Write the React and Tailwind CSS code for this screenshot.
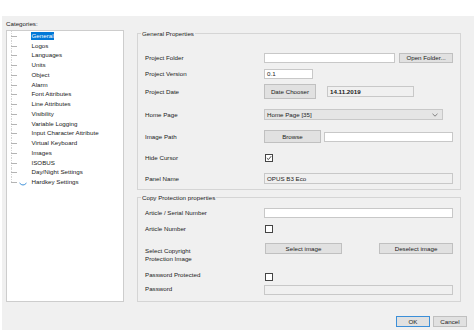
import { useState } from "react";

const categorias = [
  "General",
  "Logos",
  "Languages",
  "Units",
  "Object",
  "Alarm",
  "Font Attributes",
  "Line Attributes",
  "Visibility",
  "Variable Logging",
  "Input Character Attribute",
  "Virtual Keyboard",
  "Images",
  "ISOBUS",
  "Day/Night Settings",
  "Hardkey Settings",
];

function Boton({ children, className = "" }) {
  return (
    <div
      className={`flex items-center justify-center border bg-[#e1e1e1] text-[#1a1a1a] ${className}`}
    >
      {children}
    </div>
  );
}

function Campo({ children, className = "", gris = false }) {
  return (
    <div
      className={`flex items-center border border-[#c8c8c8] px-[2px] ${
        gris ? "bg-[#f0f0f0]" : "bg-white"
      } ${className}`}
    >
      {children}
    </div>
  );
}

function Casilla({ marcada = false }) {
  return (
    <div className="ml-[1px] flex h-[8px] w-[8px] items-center justify-center border border-[#444] bg-white">
      {marcada && (
        <svg width="6" height="6" viewBox="0 0 6 6">
          <path d="M0.8 3.1 L2.4 4.6 L5.2 1.2" fill="none" stroke="#333" strokeWidth="0.9" />
        </svg>
      )}
    </div>
  );
}

function Grupo({ titulo, className = "", children }) {
  return (
    <div className={`relative border border-[#d5d5d5] ${className}`}>
      <span className="absolute -top-[5px] left-[3px] bg-[#f0f0f0] px-[1px] leading-[9px]">
        {titulo}
      </span>
      {children}
    </div>
  );
}

function Fila({ label, alto, children }) {
  return (
    <div className={`flex items-center ${alto}`}>
      <span className="w-[119px] shrink-0">{label}</span>
      {children}
    </div>
  );
}

function App() {
  const [seleccion] = useState("General");

  return (
    <div
      className="h-[335px] w-[474px] overflow-hidden bg-white pl-[2px] pt-[16px] text-[6.2px] leading-[8px] text-[#222]"
      style={{ fontFamily: '"Liberation Sans", Arial, sans-serif' }}
    >
      <div className="flex h-[314px] w-[472px] flex-col bg-[#f0f0f0]">
        <div className="flex items-start">
          {/* categorias */}
          <div className="ml-[4px] flex flex-col pt-[4px]">
            <span className="h-[10px] leading-[8px]">Categories:</span>
            <div className="h-[272px] w-[118px] border border-[#cdcdcd] bg-white">
              {categorias.map((cat, i) => {
                const ultima = i === categorias.length - 1;
                return (
                  <div key={cat} className="flex h-[9.75px]">
                    <div className="relative ml-[4px] flex w-[20px] flex-col">
                      <div className="h-1/2 border-l border-dotted border-[#d4d4d4]" />
                      {!ultima && (
                        <div className="h-1/2 border-l border-dotted border-[#d4d4d4]" />
                      )}
                      <div className="absolute left-0 top-1/2 w-[6px] border-t border-[#b4b4b4]" />
                      {ultima && (
                        <svg
                          className="absolute left-[8px] top-[5px]"
                          width="8"
                          height="5"
                          viewBox="0 0 8 5"
                        >
                          <path d="M0.5 1 Q4 5 7.5 1" fill="none" stroke="#3c8fd8" strokeWidth="1" />
                        </svg>
                      )}
                    </div>
                    <div className="flex items-center">
                      <span
                        className={`px-[0.5px] leading-[8px] ${
                          cat === seleccion ? "bg-[#0078d7] text-white" : ""
                        }`}
                      >
                        {cat}
                      </span>
                    </div>
                  </div>
                );
              })}
            </div>
          </div>

          {/* propiedades */}
          <div className="ml-[13px] mt-[17px] flex flex-col">
            <Grupo titulo="General Properties" className="h-[157px] w-[324px] pl-[7px] pt-[16px]">
              <Fila label="Project Folder" alto="h-[16px]">
                <Campo className="h-[10px] w-[131px]" />
                <Boton className="ml-[4px] h-[10px] w-[54px] border-[#c0c0c0]">Open Folder...</Boton>
              </Fila>
              <Fila label="Project Version" alto="h-[15px]">
                <Campo className="h-[10px] w-[49px]">0.1</Campo>
              </Fila>
              <Fila label="Project Date" alto="h-[21px]">
                <Boton className="h-[15px] w-[52px] border-[#c0c0c0]">Date Chooser</Boton>
                <Campo gris className="ml-[11px] h-[11px] w-[87px] font-bold">
                  14.11.2019
                </Campo>
              </Fila>
              <Fila label="Home Page" alto="h-[25px]">
                <div className="flex h-[11px] w-[179px] items-center justify-between border border-[#c8c8c8] bg-[#e5e5e5] px-[2px]">
                  <span>Home Page [35]</span>
                  <svg width="6" height="4" viewBox="0 0 6 4" className="mr-[2px]">
                    <path d="M0.5 0.8 L3 3.2 L5.5 0.8" fill="none" stroke="#666" strokeWidth="0.8" />
                  </svg>
                </div>
              </Fila>
              <Fila label="Image Path" alto="h-[19px]">
                <Boton className="h-[13px] w-[57px] border-[#c0c0c0]">Browse</Boton>
                <Campo className="ml-[3px] h-[10px] w-[129px]" />
              </Fila>
              <Fila label="Hide Cursor" alto="h-[24px]">
                <Casilla marcada />
              </Fila>
              <Fila label="Panel Name" alto="h-[17px]">
                <Campo gris className="h-[11px] w-[189px]">OPUS B3 Eco</Campo>
              </Fila>
            </Grupo>

            <Grupo titulo="Copy Protection properties" className="mt-[7px] h-[105px] w-[324px] pl-[7px] pt-[7px]">
              <Fila label="Article / Serial Number" alto="h-[16px]">
                <Campo className="h-[10px] w-[189px]" />
              </Fila>
              <Fila label="Article Number" alto="h-[15px]">
                <Casilla />
              </Fila>
              <div className="flex h-[30px] items-start">
                <span className="mt-[11px] w-[119px] shrink-0 leading-[7.5px]">
                  Select Copyright
                  <br />
                  Protection Image
                </span>
                <Boton className="ml-[1px] mt-[7px] h-[11px] w-[77px] border-[#c0c0c0]">Select image</Boton>
                <Boton className="ml-[37px] mt-[7px] h-[11px] w-[74px] border-[#c0c0c0]">Deselect image</Boton>
              </div>
              <div className="flex h-[17px] items-start">
                <span className="mt-[5px] w-[119px] shrink-0">Password Protected</span>
                <div className="mt-[7px]">
                  <Casilla />
                </div>
              </div>
              <div className="flex h-[14px] items-center">
                <span className="-mt-[2px] w-[119px] shrink-0">Password</span>
                <Campo gris className="h-[10px] w-[189px]" />
              </div>
            </Grupo>
          </div>
        </div>

        {/* botones */}
        <div className="mt-[14px] flex justify-end gap-[3px] pr-[7px]">
          <Boton className="h-[11px] w-[34px] border-[#3c8fd8]">OK</Boton>
          <Boton className="h-[11px] w-[34px] border-[#c0c0c0]">Cancel</Boton>
        </div>
      </div>
    </div>
  );
}

export default App;
